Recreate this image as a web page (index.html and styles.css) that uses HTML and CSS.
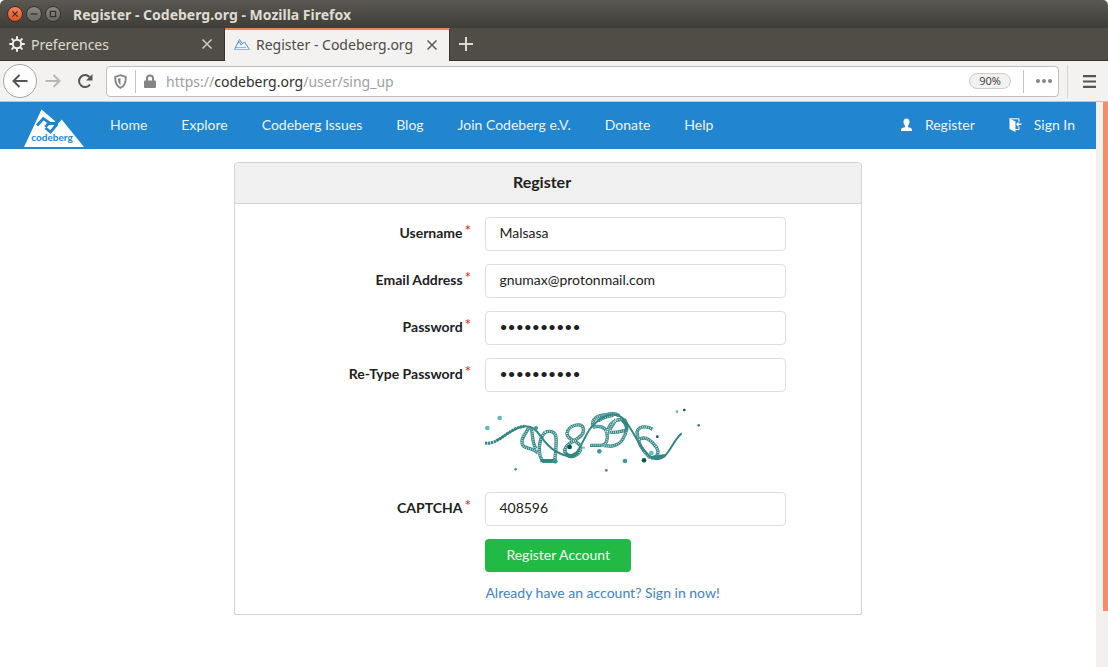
FILE: index.html
```html
<!DOCTYPE html>
<html lang="en">
<head>
<meta charset="utf-8">
<title>Register - Codeberg.org</title>
<link rel="stylesheet" href="styles.css">
</head>
<body>
<div class="window">
  <div class="titlebar">
    <button class="win-btn win-close" aria-label="Close window"><svg viewBox="0 0 16 16"><path d="M5 5l6 6m0-6l-6 6"/></svg></button>
    <button class="win-btn" aria-label="Minimize"><svg viewBox="0 0 16 16"><path d="M4 8h8"/></svg></button>
    <button class="win-btn" aria-label="Maximize"><svg viewBox="0 0 16 16"><path d="M5 5h6v6H5z"/></svg></button>
    <span class="window-title">Register - Codeberg.org - Mozilla Firefox</span>
  </div>

  <div class="tabs">
    <div class="tab">
      <svg class="tab-icon" viewBox="0 0 16 16" fill="none" stroke="#f0eee9"><circle cx="8" cy="8" r="4.2" stroke-width="2"/><path stroke-width="2" stroke-linecap="round" d="M8 1v2M8 13v2M1 8h2M13 8h2M3.100 3.100l1.300 1.300M11.600 11.600l1.300 1.300M3.100 12.900l1.300-1.300M11.600 4.400l1.300-1.300"/></svg>
      <span class="tab-label">Preferences</span>
      <button class="tab-close" aria-label="Close Preferences tab"><svg viewBox="0 0 12 12"><path d="M1.500 1.500l9 9m0-9l-9 9"/></svg></button>
    </div>
    <div class="tab tab-active">
      <svg class="tab-icon" viewBox="0 0 16 16" fill="none" stroke="#4d8fdc" stroke-width="1"><path d="M0.500 12.500L5.500 2.500l3 4 2-1.500 5 7.500M3.500 6.500L5.500 5l1.500 3 2-2"/><path stroke="#8bb9e8" d="M2 10.500h10M1 12.500h14"/></svg>
      <span class="tab-label">Register - Codeberg.org</span>
      <button class="tab-close" aria-label="Close Register tab"><svg viewBox="0 0 12 12"><path d="M1.500 1.500l9 9m0-9l-9 9"/></svg></button>
    </div>
    <button class="new-tab" aria-label="New tab"><svg viewBox="0 0 14 14"><path d="M7 0v14M0 7h14"/></svg></button>
  </div>

  <div class="toolbar">
    <button class="back" aria-label="Back"><svg viewBox="0 0 16 16"><path d="M15.500 8H1.500M7.500 2L1.500 8l6 6"/></svg></button>
    <button class="tool forward" aria-label="Forward"><svg viewBox="0 0 16 16"><path d="M0.500 8h14M8.500 2l6 6-6 6"/></svg></button>
    <button class="tool reload" aria-label="Reload"><svg viewBox="0 0 16 16"><path d="M13 11.500A6 6 0 1 1 12.500 4"/><path class="solid" d="M15.500 1v6.500H9z"/></svg></button>
    <div class="urlbar">
      <svg class="shield" viewBox="0 0 14 16" fill="none" stroke="#858585" stroke-width="1.800"><path d="M7 1.200L12.700 3c.2 6-1.400 9.800-5.700 11.800C2.700 12.800 1.100 9 1.300 3z"/><path fill="#858585" stroke="none" d="M7 4.200v7.800C5 10.500 4.200 8 4.200 5z"/></svg>
      <span class="divider"></span>
      <svg class="lock" viewBox="0 0 12 15" fill="#858585"><path fill-rule="evenodd" d="M2 6.500V4.500a4 4 0 0 1 8 0v2h1q1 0 1 1V13q0 1-1 1H1q-1 0-1-1V7.500q0-1 1-1zM4 6.500h4v-2a2 2 0 0 0-4 0z"/></svg>
      <span class="url">https://<b>codeberg.org</b>/user/sing_up</span>
      <button class="zoom-level">90%</button>
      <span class="divider"></span>
      <button class="tool more" aria-label="Page actions"><svg viewBox="0 0 16 4"><circle cx="2" cy="2" r="2"/><circle cx="8" cy="2" r="2"/><circle cx="14" cy="2" r="2"/></svg></button>
    </div>
    <span class="menu-divider"></span>
    <button class="tool menu" aria-label="Menu"><svg viewBox="0 0 12 12"><path d="M0 1h12M0 6h12M0 11h12"/></svg></button>
  </div>

  <div class="viewport">
    <div class="page">
      <nav class="nav">
        <a class="logo" href="#" aria-label="Codeberg">
          <svg viewBox="0 0 60 38"><path fill="#fff" d="M0 38L17.500 0.500 31.500 12.500 28 22 37.700 10.500 60 38z"/><path fill="none" stroke="#2185d0" stroke-width="2.800" d="M13 16.500L19.300 9.500l5.700 4-3.500 4.500M24 14.500l7 0M30.500 13l2 3-6 7-5-4"/><text class="logo-text" x="28" y="32" text-anchor="middle">codeberg</text></svg>
        </a>
        <a class="nav-item" href="#">Home</a>
        <a class="nav-item" href="#">Explore</a>
        <a class="nav-item" href="#">Codeberg Issues</a>
        <a class="nav-item" href="#">Blog</a>
        <a class="nav-item" href="#">Join Codeberg e.V.</a>
        <a class="nav-item" href="#">Donate</a>
        <a class="nav-item" href="#">Help</a>
        <span class="nav-right">
          <a class="nav-item nav-icon-item" href="#"><svg viewBox="0 0 12 14" fill="#fff"><path d="M6 0.500c2 0 3 1.500 3 3.300C9 5.500 8.300 7 7.500 7.800v1.400c2 .3 4 .8 4 2.800v1H.5v-1c0-2 2-2.500 4-2.800V7.800C3.700 7 3 5.500 3 3.800 3 2 4 .5 6 .5z"/></svg>Register</a>
          <a class="nav-item nav-icon-item" href="#"><svg viewBox="0 0 12 14"><path fill="#fff" d="M0 0.500l6 3v10.500l-6-3z"/><path fill="none" stroke="#fff" d="M0 .8h9.500v3M9.500 8.500v3H6"/><path fill="#fff" d="M6.500 6.200L9 3.500v2h3v1.500H9v2z"/></svg>Sign In</a>
        </span>
      </nav>

      <main class="panel">
        <h1 class="panel-title">Register</h1>
        <form class="form">
          <label class="label" for="username">Username</label>
          <input class="input" id="username" type="text" value="Malsasa">
          <label class="label" for="email">Email Address</label>
          <input class="input" id="email" type="text" value="gnumax@protonmail.com">
          <label class="label" for="password">Password</label>
          <input class="input" id="password" type="password" value="abcdefghij">
          <label class="label" for="retype">Re-Type Password</label>
          <input class="input" id="retype" type="password" value="abcdefghij">
          <svg class="captcha" viewBox="27 27 648 222" role="img" aria-label="Captcha image" fill="none">
            <defs>
              <g id="digits" stroke-linejoin="round">
                <path d="M158 95C152 112 132 125 139 145C144 162 170 152 186 172M165 95C172 112 166 138 180 158"/>
                <path d="M208 108C225 103 239 108 240 125C242 150 238 172 236 196H202C184 178 186 130 208 108"/>
                <path d="M322 98C318 76 276 88 273 112C270 132 312 134 315 155C312 182 278 190 267 170C262 150 285 140 298 132C315 120 326 112 322 98"/>
                <path d="M350 94C345 68 365 58 388 57C405 52 420 50 430 60M350 94C370 86 390 95 393 110C396 130 392 148 375 148H342"/>
                <path d="M394 108C400 80 420 66 446 72C458 90 450 115 440 130C425 152 405 152 384 149M388 105C405 112 430 108 447 103M366 75C380 64 396 60 412 58M420 70L402 100"/>
                <path d="M530 100C516 90 488 88 483 108C484 138 500 165 520 183C545 190 552 170 540 152C528 135 508 118 490 130"/>
              </g>
            </defs>
            <use href="#digits" stroke="#328785" stroke-width="10"/>
            <use href="#digits" stroke="#e4f2f1" stroke-width="6" stroke-dasharray="2 4"/>
            <g stroke="#328785" stroke-width="6" stroke-linejoin="round">
              <path d="M60 134C90 120 110 96 145 91C190 88 190 135 235 163C262 178 280 190 304 166C325 135 335 100 350 90C375 60 415 40 446 72C480 115 500 180 540 190C578 190 585 140 617 112"/>
              <path stroke-width="9" stroke-dasharray="7 2" d="M27 141C50 145 70 130 92 114C108 104 122 94 145 91"/>
              <path stroke-width="10" d="M193 194h42M268 172q18 16 38-3M438 72q15 10 14 32M525 186l42-7"/>
            </g>
            <g fill="#61bbb9"><circle cx="34" cy="96" r="7"/><circle cx="71" cy="66" r="7"/><circle cx="526" cy="171" r="7"/><circle cx="603" cy="47" r="4"/><circle cx="324" cy="155" r="3"/></g>
            <g fill="#3d9895"><circle cx="370" cy="166" r="7"/><circle cx="447" cy="195" r="7"/><circle cx="238" cy="196" r="7"/><circle cx="119" cy="220" r="4"/><circle cx="180" cy="96" r="6"/></g>
            <g fill="#075553"><circle cx="281" cy="153" r="7"/><circle cx="504" cy="193" r="7"/><circle cx="625" cy="42" r="4"/><circle cx="544" cy="122" r="4"/></g>
            <g fill="#328785"><circle cx="668" cy="88" r="4"/><circle cx="391" cy="223" r="4"/></g>
          </svg>
          <label class="label" for="captcha">CAPTCHA</label>
          <input class="input" id="captcha" type="text" value="408596">
          <button class="submit" type="button">Register Account</button>
          <a class="signin" href="#">Already have an account? Sign in now!</a>
        </form>
      </main>
    </div>
    <div class="scrollbar"><div class="thumb"></div></div>
  </div>
</div>
</body>
</html>
```
FILE: styles.css
```css
* { box-sizing: border-box; }
body { margin: 0; font-family: Lato, sans-serif; font-size: 14px; color: #212121; }
button { border: 0; padding: 0; background: none; font: inherit; }
svg { display: block; flex: none; }
a { text-decoration: none; }

.window { display: flex; flex-direction: column; height: 100vh; }
.titlebar, .tabs, .toolbar { font-family: "Noto Sans", sans-serif; flex: none; }

.titlebar { display: flex; align-items: center; gap: 3px; height: 28px; padding: 0 7px; background: linear-gradient(#5a5851, #3e3d38); border-radius: 5px 5px 0 0; }
.win-btn { width: 16px; height: 16px; border-radius: 50%; background: linear-gradient(#8a8881, #6b6963); border: 1px solid #34332f; }
.win-btn svg { width: 14px; height: 14px; fill: none; stroke: #34332f; stroke-width: 1.5; }
.win-close { background: linear-gradient(#f8845c, #e2501f); }
.window-title { margin-left: 9px; font-size: 14px; font-weight: 700; color: #dfdbd2; white-space: nowrap; }

.tabs { display: flex; height: 33px; background: #504d46; border-bottom: 1px solid #35332f; }
.tab { display: flex; align-items: center; width: 225px; padding: 0 11px 0 9px; border-right: 1px solid #35332f; color: #dfdbd2; font-size: 14px; white-space: nowrap; }
.tab-active { height: 33px; padding-bottom: 2px; background: #f4f2f1; color: #4a4a4a; border-top: 2px solid #f1825a; }
.tab-icon { width: 16px; height: 16px; margin-right: 6px; }
.tab-label { flex: 1; }
.tab-close svg { width: 12px; height: 12px; fill: none; stroke: #d0ccc4; stroke-width: 1.5; }
.tab-active .tab-close svg { stroke: #5a5a58; }
.new-tab { padding: 0 9px; }
.new-tab svg { width: 14px; height: 14px; stroke: #dfdbd2; stroke-width: 2; }

.toolbar { display: flex; align-items: center; height: 41px; padding: 0 12px 0 3px; background: #f4f2f1; border-bottom: 1px solid #c9c6c1; }
.back { display: grid; place-items: center; width: 34px; height: 34px; border: 1px solid #a9a7a3; border-radius: 50%; background: #fdfdfd; }
.toolbar svg { fill: none; stroke-width: 2; }
.back svg, .tool svg { stroke: #555551; width: 16px; height: 16px; }
.tool.forward { margin-left: 8px; }
.tool.forward svg { stroke: #b9b7b4; }
.reload { margin: 0 13px 0 16px; }
.tool.reload svg .solid { fill: #555551; stroke: none; }
.urlbar { display: flex; flex: 1; align-items: center; height: 31px; padding: 0 6px 0 7px; background: #fff; border: 1px solid #c3bfba; border-radius: 4px; }
.urlbar .shield { width: 13px; height: 15px; }
.urlbar .lock { width: 12px; height: 15px; margin-right: 10px; fill: #858585; }
.divider { width: 1px; height: 23px; margin: 0 8px; background: #c9c6c2; }
.url { flex: 1; font-size: 14px; color: #a0a0a0; white-space: nowrap; }
.url b { font-weight: 400; color: #303030; }
.zoom-level { width: 42px; height: 16px; margin-right: 4px; border: 1px solid #cfccc9; border-radius: 8px; background: #f2f1f0; color: #444; font-size: 11px; line-height: 14px; }
.divider + .more { margin-left: 4px; }
.tool.more svg { height: 4px; fill: #858585; stroke: none; }
.menu-divider { width: 1px; height: 33px; margin: 0 15px 0 8px; background: #d6d3d0; }
.tool.menu svg { width: 13px; height: 13px; }

.viewport { display: flex; flex: 1; min-height: 0; }
.page { flex: 1; min-width: 0; background: #fff; }
.scrollbar { display: flex; justify-content: flex-end; width: 12px; background: #f1f0ef; }
.thumb { width: 5px; height: 90%; background: #f38e69; }

.nav { display: flex; align-items: center; height: 47px; padding: 0 4px 2px 24px; background: #2185d0; }
.logo { margin-right: 9px; }
.logo svg { width: 60px; height: 38px; margin-top: 6px; }
.logo-text { font-family: Lato, sans-serif; font-size: 10px; font-weight: 700; fill: #2185d0; }
.nav-item { padding: 0 17px; color: #ebf4fb; white-space: nowrap; }
.nav-right { display: flex; margin-left: auto; }
.nav-icon-item { display: flex; align-items: center; gap: 12px; }
.nav-icon-item svg { width: 13px; height: 14px; }

.panel { width: min(628px, 100%); margin: 13px auto; border: 1px solid #d4d4d5; border-radius: 4px 4px 0 0; }
.panel-title { margin: 0; height: 41px; padding-right: 12px; border-bottom: 1px solid #d4d4d5; border-radius: 4px 4px 0 0; background: #f0f0f0; font-size: 16px; line-height: 38px; font-weight: 700; text-align: center; }
.form { display: grid; grid-template-columns: 40% 48%; row-gap: 13px; padding: 13px 0; }
.label { padding-right: 14px; font-weight: 700; line-height: 32px; text-align: right; }
.label::after { content: "*"; margin-left: 2px; color: #db2828; font-size: 16px; font-weight: 400; vertical-align: 2px; line-height: 1; }
.input { min-width: 0; width: 100%; height: 34px; padding: 0 13px 3px; border: 1px solid #dededf; border-radius: 4px; background: #fff; color: #212121; font: inherit; }
.captcha, .submit, .signin { grid-column: 2; justify-self: start; }
.captcha { width: 216px; height: 74px; }
.submit { height: 33px; padding: 0 21px 2px; border-radius: 4px; background: #21ba45; color: #f4fcf6; }
.signin { color: #4183c4; line-height: 16px; }
```
